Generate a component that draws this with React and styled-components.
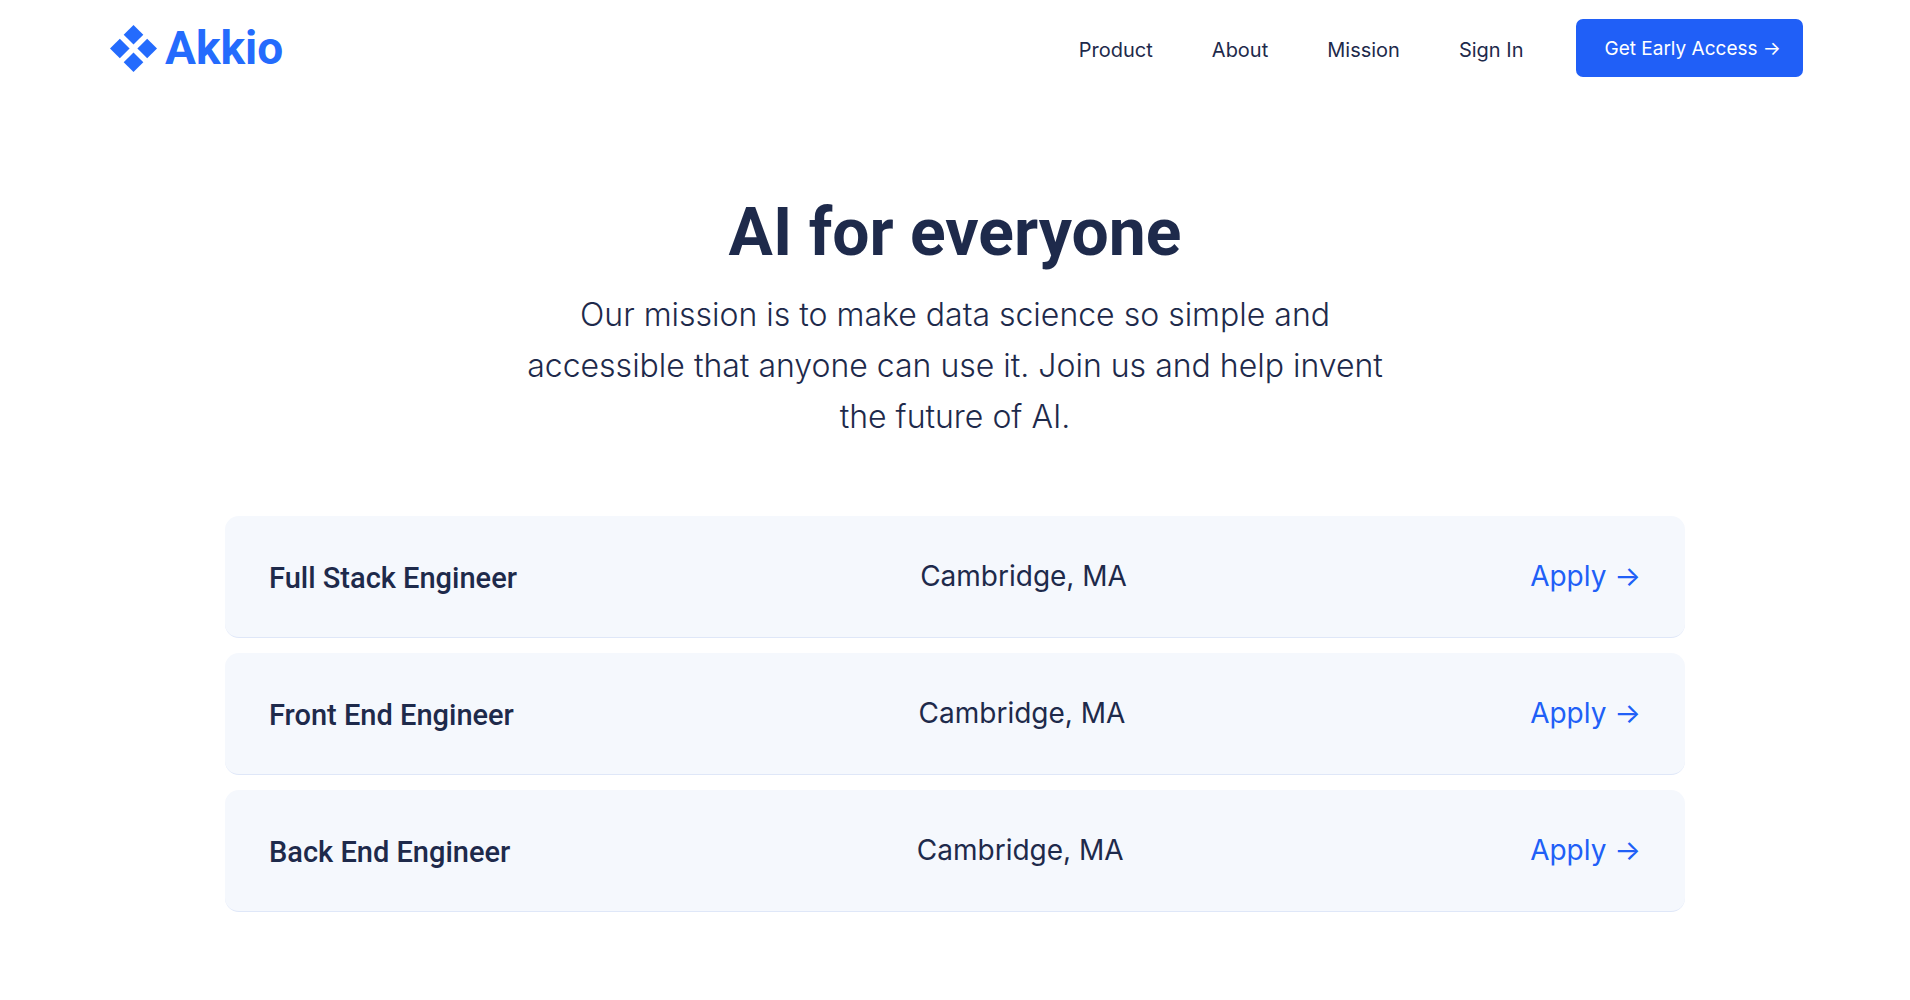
import React from "react";
import styled, { createGlobalStyle } from "styled-components";

const GlobalStyle = createGlobalStyle`
  *, *::before, *::after { box-sizing: border-box; }
  body {
    margin: 0;
    background: #ffffff;
    color: #1e2a4b;
    font-family: Inter, "Liberation Sans", sans-serif;
    -webkit-font-smoothing: antialiased;
  }
`;

const display = `Roboto, "Liberation Sans", sans-serif`;

const Header = styled.header`
  display: flex;
  align-items: center;
  justify-content: space-between;
  padding: 19px 107px 0 110px;
`;

const Brand = styled.a`
  display: flex;
  align-items: center;
  gap: 8px;
  color: #246bfd;
  font-family: ${display};
  font-size: 46px;
  font-weight: 700;
  line-height: 58px;
  text-decoration: none;
`;

const Nav = styled.nav`
  display: flex;
  align-items: center;
  gap: 52px;
`;

const NavList = styled.ul`
  display: flex;
  gap: 59px;
  margin: 0;
  padding: 4px 0 0;
  list-style: none;
`;

const NavLink = styled.a`
  color: inherit;
  font-size: 20px;
  line-height: 24px;
  text-decoration: none;
`;

const AccessButton = styled.button`
  height: 58px;
  padding: 2px 22px 0 29px;
  border: 0;
  border-radius: 7px;
  background: #205ff7;
  color: #ffffff;
  font-family: inherit;
  font-size: 19px;
  line-height: 24px;
  cursor: pointer;
`;

const Hero = styled.section`
  max-width: 900px;
  margin: 0 auto;
  padding-top: 116px;
  text-align: center;
`;

const Title = styled.h1`
  margin: 0;
  font-family: ${display};
  font-size: 66px;
  font-weight: 700;
  line-height: 80px;
`;

const Lead = styled.p`
  margin: 16px 0 0;
  font-size: 32px;
  font-weight: 300;
  line-height: 51px;
`;

const Jobs = styled.ul`
  display: flex;
  flex-direction: column;
  gap: 15px;
  max-width: 1460px;
  margin: 74px auto 0;
  padding: 0;
  list-style: none;
`;

const Job = styled.li`
  display: flex;
  align-items: center;
  justify-content: space-between;
  min-height: 122px;
  padding: 0 44px 2px;
  border-bottom: 1px solid #dfe7f8;
  border-radius: 14px;
  background: #f5f8fd;
`;

const JobTitle = styled.h2`
  margin: 0;
  padding-top: 4px;
  font-family: ${display};
  font-size: 29px;
  font-weight: 500;
  line-height: 36px;
`;

const Location = styled.span`
  font-size: 28px;
  line-height: 36px;
`;

const Apply = styled.a`
  color: #205ff7;
  font-size: 28px;
  line-height: 36px;
  text-decoration: none;
`;

const Mark = () => (
  <svg width="47" height="47" viewBox="0 0 47 47" fill="currentColor" aria-hidden="true">
    <path d="M23.5 0 33.3 9.8 23.5 19.6 13.7 9.8Z" />
    <path d="M37.2 13.7 47 23.5 37.2 33.3 27.4 23.5Z" />
    <path d="M23.5 27.4 33.3 37.2 23.5 47 13.7 37.2Z" />
    <path d="M9.8 13.7 19.6 23.5 9.8 33.3 0 23.5Z" />
  </svg>
);

const links = ["Product", "About", "Mission", "Sign In"];

const jobs = [
  { title: "Full Stack Engineer", location: "Cambridge, MA" },
  { title: "Front End Engineer", location: "Cambridge, MA" },
  { title: "Back End Engineer", location: "Cambridge, MA" },
];

export default function App() {
  return (
    <>
      <GlobalStyle />
      <Header>
        <Brand href="#">
          <Mark />
          Akkio
        </Brand>
        <Nav>
          <NavList>
            {links.map((label) => (
              <li key={label}>
                <NavLink href="#">{label}</NavLink>
              </li>
            ))}
          </NavList>
          <AccessButton type="button">Get Early Access →</AccessButton>
        </Nav>
      </Header>
      <main>
        <Hero>
          <Title>AI for everyone</Title>
          <Lead>
            Our mission is to make data science so simple and accessible that
            anyone can use it. Join us and help invent the future of AI.
          </Lead>
        </Hero>
        <Jobs>
          {jobs.map((job) => (
            <Job key={job.title}>
              <JobTitle>{job.title}</JobTitle>
              <Location>{job.location}</Location>
              <Apply href="#">Apply →</Apply>
            </Job>
          ))}
        </Jobs>
      </main>
    </>
  );
}
